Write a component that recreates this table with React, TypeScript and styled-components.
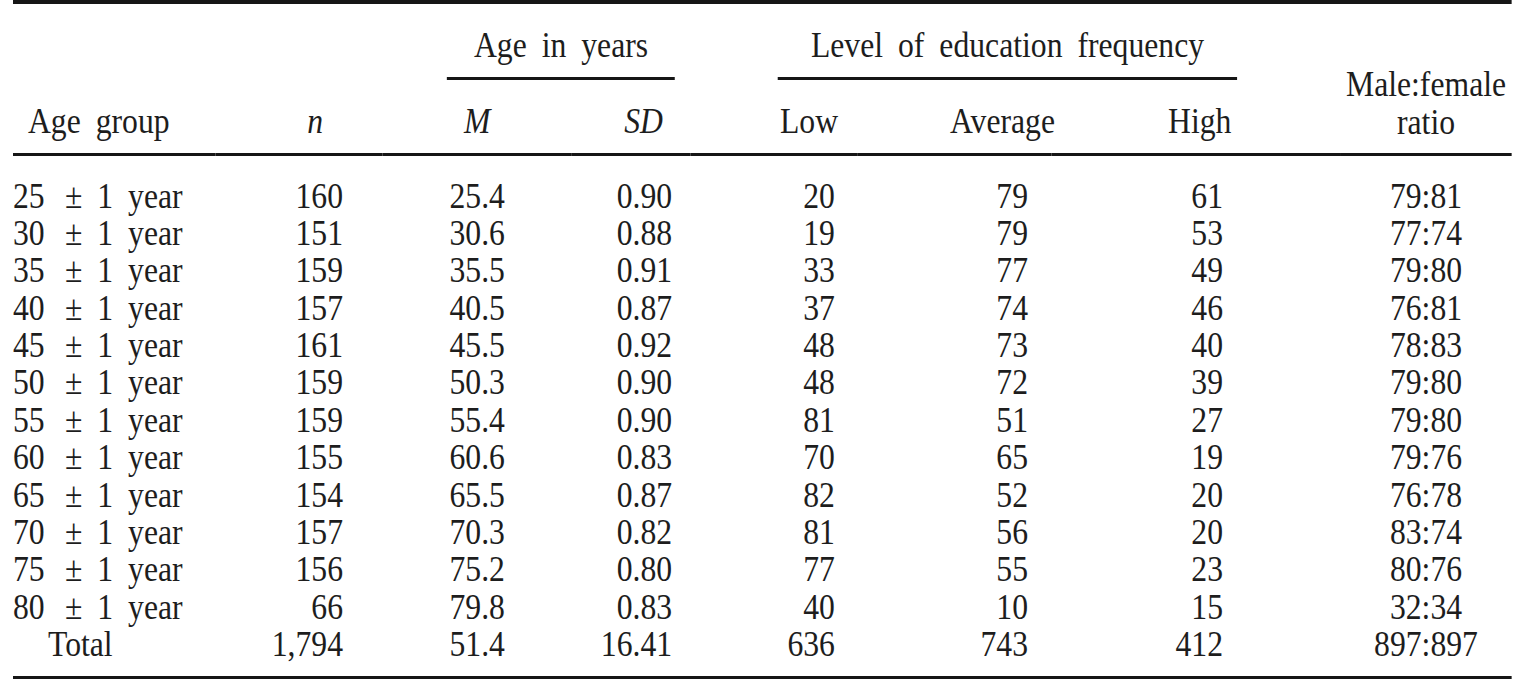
import React from 'react'
import styled, { createGlobalStyle } from 'styled-components'

// The printed table uses a narrow Times; the whole sheet is laid out at 36px
// and squeezed horizontally so glyph widths and heights both match.
const SQUEEZE = 0.88
const SHEET_WIDTH = 1499 / SQUEEZE
const ROW_HEIGHT = 37.375

type Align = 'left' | 'center' | 'right'

type Column = {
  readonly width: number
  readonly align: Align
  readonly padLeft?: number
  readonly padRight?: number
}

type HeadLabel = Column & {
  readonly text: string
  readonly italic?: boolean
}

const dataColumns: Column[] = [
  { width: 230, align: 'left' },
  { width: 190, align: 'right', padRight: 45 },
  { width: 215, align: 'center' },
  { width: 135, align: 'right', padRight: 21 },
  { width: 190, align: 'right', padRight: 26 },
  { width: 220, align: 'right', padRight: 26.6 },
  { width: 328, align: 'right', padRight: 133 },
  { width: SHEET_WIDTH - 1508, align: 'center' },
]

const subLabels: HeadLabel[] = [
  { width: 215, align: 'center', text: 'M', italic: true },
  { width: 135, align: 'right', padRight: 31.4, text: 'SD', italic: true },
  { width: 190, align: 'left', padLeft: 101.6, text: 'Low' },
  { width: 220, align: 'left', padLeft: 104.8, text: 'Average' },
  { width: 328, align: 'left', padLeft: 132.5, text: 'High' },
]

const rows: string[][] = [
  ['25', '160', '25.4', '0.90', '20', '79', '61', '79:81'],
  ['30', '151', '30.6', '0.88', '19', '79', '53', '77:74'],
  ['35', '159', '35.5', '0.91', '33', '77', '49', '79:80'],
  ['40', '157', '40.5', '0.87', '37', '74', '46', '76:81'],
  ['45', '161', '45.5', '0.92', '48', '73', '40', '78:83'],
  ['50', '159', '50.3', '0.90', '48', '72', '39', '79:80'],
  ['55', '159', '55.4', '0.90', '81', '51', '27', '79:80'],
  ['60', '155', '60.6', '0.83', '70', '65', '19', '79:76'],
  ['65', '154', '65.5', '0.87', '82', '52', '20', '76:78'],
  ['70', '157', '70.3', '0.82', '81', '56', '20', '83:74'],
  ['75', '156', '75.2', '0.80', '77', '55', '23', '80:76'],
  ['80', '66', '79.8', '0.83', '40', '10', '15', '32:34'],
]

const total = ['Total', '1,794', '51.4', '16.41', '636', '743', '412', '897:897']

const App: React.FC = () => {
  return (
    <>
      <GlobalStyle />
      <Page>
        <Sheet>
          <Table>
            <colgroup>
              {dataColumns.map((col, i) => (
                <Col key={i} $width={col.width} />
              ))}
            </colgroup>
            <thead>
              <tr>
                <SpanHead rowSpan={2} $align="left" $padLeft={17}>Age group</SpanHead>
                <SpanHead rowSpan={2} $align="right" $padRight={67.7}>
                  <Italic>n</Italic>
                </SpanHead>
                <GroupCell colSpan={2}>
                  <GroupLabel $left={73.2} $right={17.7}>Age in years</GroupLabel>
                </GroupCell>
                <GroupCell colSpan={3}>
                  <GroupLabel $left={99.3} $right={117.1}>Level of education frequency</GroupLabel>
                </GroupCell>
                <SpanHead rowSpan={2} $align="center" $tall>
                  Male:female<br />ratio
                </SpanHead>
              </tr>
              <tr>
                {subLabels.map(label => (
                  <SubHead
                    key={label.text}
                    $align={label.align}
                    $padLeft={label.padLeft}
                    $padRight={label.padRight}
                  >
                    {label.italic ? <Italic>{label.text}</Italic> : label.text}
                  </SubHead>
                ))}
              </tr>
            </thead>
            <tbody>
              {rows.map(row => (
                <tr key={row[0]}>
                  {row.map((value, i) => {
                    const col = dataColumns[i]
                    return (
                      <DataCell key={i} $align={col.align} $padLeft={col.padLeft} $padRight={col.padRight}>
                        {i === 0 ? <>{value} <PlusMinus>±</PlusMinus> 1 year</> : value}
                      </DataCell>
                    )
                  })}
                </tr>
              ))}
              <tr>
                {total.map((value, i) => {
                  const col = dataColumns[i]
                  return (
                    <DataCell
                      key={i}
                      $align={col.align}
                      $padLeft={i === 0 ? 39.8 : col.padLeft}
                      $padRight={col.padRight}
                    >
                      {value}
                    </DataCell>
                  )
                })}
              </tr>
            </tbody>
          </Table>
        </Sheet>
      </Page>
    </>
  )
}

export default App

const GlobalStyle = createGlobalStyle`
  html, body {
    margin: 0;
    padding: 0;
    background: #ffffff;
    overflow: hidden;
  }
  body {
    font-family: 'Liberation Serif', 'Times New Roman', serif;
    color: #1d1d1d;
  }
`

const Page = styled.div`
  padding-left: 13px;
`

const Sheet = styled.div`
  width: ${SHEET_WIDTH}px;
  transform: scaleX(${SQUEEZE});
  transform-origin: 0 0;
`

const Table = styled.table`
  width: 100%;
  table-layout: fixed;
  border-collapse: separate;
  border-spacing: 0;
  border-top: 4px solid #161616;
  border-bottom: 3px solid #161616;
  font-size: 36px;
  line-height: ${ROW_HEIGHT}px;
  word-spacing: 8px;
  font-weight: 400;

  tbody tr:first-child td {
    padding-top: 21.5px;
  }

  tbody tr:last-child td {
    padding-bottom: 12.7px;
  }
`

type ColProps = {
  readonly $width: number
}

const Col = styled.col<ColProps>`
  width: ${props => props.$width}px;
`

type CellProps = {
  readonly $align: Align
  readonly $padLeft?: number
  readonly $padRight?: number
}

const DataCell = styled.td<CellProps>`
  padding: 0 ${props => props.$padRight ?? 0}px 0 ${props => props.$padLeft ?? 0}px;
  text-align: ${props => props.$align};
  white-space: nowrap;
`

const PlusMinus = styled.span`
  margin-left: 6px;
`

type SpanHeadProps = CellProps & {
  readonly $tall?: boolean
}

const SpanHead = styled.th<SpanHeadProps>`
  padding: 0 ${props => props.$padRight ?? 0}px 12.5px ${props => props.$padLeft ?? 0}px;
  text-align: ${props => props.$align};
  vertical-align: bottom;
  font-weight: 400;
  white-space: nowrap;
  line-height: ${props => props.$tall ? '38px' : `${ROW_HEIGHT}px`};
  border-bottom: 3px solid #161616;
`

const SubHead = styled.th<CellProps>`
  padding: 23.16px ${props => props.$padRight ?? 0}px 12.5px ${props => props.$padLeft ?? 0}px;
  text-align: ${props => props.$align};
  font-weight: 400;
  white-space: nowrap;
  border-bottom: 3px solid #161616;
`

const GroupCell = styled.th`
  padding: 0;
  font-weight: 400;
  vertical-align: top;
`

type GroupLabelProps = {
  readonly $left: number
  readonly $right: number
}

const GroupLabel = styled.div<GroupLabelProps>`
  margin: 0 ${props => props.$right}px 0 ${props => props.$left}px;
  padding: 23.16px 0 12.5px;
  text-align: center;
  white-space: nowrap;
  border-bottom: 3px solid #161616;
`

const Italic = styled.span`
  font-style: italic;
`
